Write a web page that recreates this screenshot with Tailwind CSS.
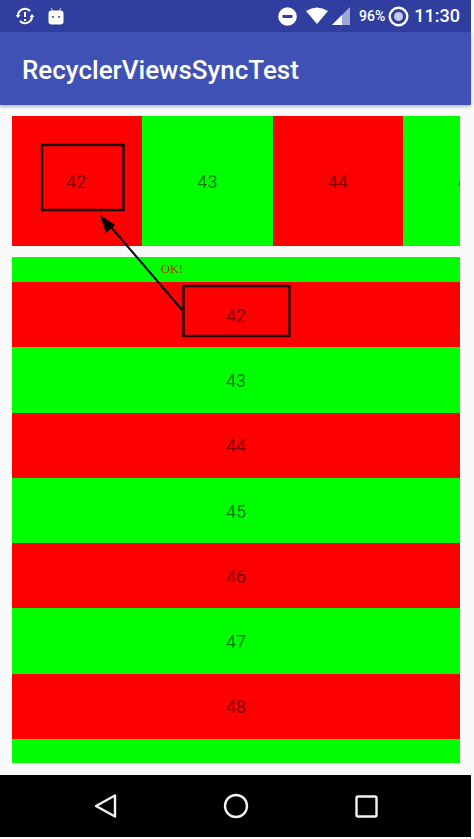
<!DOCTYPE html>
<html>
<head>
<title>RecyclerViewsSyncTest</title>
<meta charset="utf-8">
<script src="https://cdn.jsdelivr.net/npm/@tailwindcss/browser@4"></script>
</head>
<body class="bg-[#fafafa] overflow-hidden font-['Roboto',sans-serif]">
  <div class="relative w-[474px] h-[839px] overflow-hidden">
    <div class="w-[471px] h-[837px] flex flex-col">
      <!-- status bar -->
      <div class="h-8 bg-[#303f9f] flex items-center pl-[15px] pr-[11px] text-white shrink-0">
        <svg class="w-[20px] h-[18px] mr-[13px]" viewBox="0 0 20 18" fill="none" stroke="white" stroke-width="2">
          <path d="M3 9a7 7 0 0 1 12-5"/><path d="M17 9a7 7 0 0 1-12 5"/>
          <path d="M0.500 8h5l-2.500 3z" fill="white" stroke="none"/><path d="M14.500 10h5l-2.500-3z" fill="white" stroke="none"/>
          <path d="M10 5v5M10 12v2" stroke-width="2"/>
        </svg>
        <svg class="w-4 h-[18px]" viewBox="0 0 16 18" fill="white">
          <path d="M3 1l2 3M13 1l-2 3" stroke="#c5cae9" stroke-width="1"/>
          <rect x="0.500" y="3.500" width="15" height="14" rx="3"/>
          <circle cx="5" cy="10" r="1" fill="#303f9f"/><circle cx="11" cy="10" r="1" fill="#303f9f"/>
        </svg>
        <div class="flex-1"></div>
        <svg class="w-[19px] h-[19px] mr-[9px]" viewBox="0 0 19 19">
          <circle cx="9.500" cy="9.500" r="9.300" fill="white"/><rect x="4.500" y="8" width="10" height="3" fill="#303f9f"/>
        </svg>
        <svg class="w-[24px] h-[18px] mr-[2px]" viewBox="0 0 24 18"><path d="M0 4Q11 -3 22 4L11 17z" fill="white"/></svg>
        <svg class="w-[19px] h-[19px] mr-[8px]" viewBox="0 0 19 19">
          <path d="M0 18L18 0V18z" fill="#9fa8da"/><path d="M0 18L10 8V18z" fill="white"/>
        </svg>
        <span class="text-[14px] font-medium leading-none mr-[3px]">96%</span>
        <svg class="w-[21px] h-[21px] mr-[5px]" viewBox="0 0 21 21" fill="none">
          <circle cx="10.500" cy="10.500" r="8.800" stroke="white" stroke-width="2.400"/><circle cx="10.500" cy="10.500" r="4.500" fill="#c5cae9"/>
        </svg>
        <span class="text-[18px] font-medium leading-none">11:30</span>
      </div>
      <!-- toolbar -->
      <div class="h-[73px] bg-[#3f51b5] flex items-center pl-[22px] pt-[3px] shrink-0 shadow-[0_2px_3px_rgba(0,0,0,0.25)]">
        <span class="text-white text-[26px] font-medium leading-none">RecyclerViewsSyncTest</span>
      </div>
      <!-- horizontal list -->
      <div class="mt-[11px] ml-3 w-[448px] h-[130px] flex overflow-hidden text-[18px] shrink-0">
        <div class="w-[130.300px] shrink-0 pt-[1px] pr-[2px] bg-[#ff0000] text-black/50 flex items-center justify-center">42</div>
        <div class="w-[130.300px] shrink-0 pt-[1px] bg-[#00ff00] text-black/50 flex items-center justify-center">43</div>
        <div class="w-[130.300px] shrink-0 pt-[1px] bg-[#ff0000] text-black/50 flex items-center justify-center">44</div>
        <div class="w-[130.300px] shrink-0 pt-[1px] bg-[#00ff00] text-black/50 flex items-center justify-center">45</div>
      </div>
      <!-- vertical list -->
      <div class="mt-[11px] ml-3 w-[448px] h-[506px] flex flex-col overflow-hidden text-[18px] text-black/50 shrink-0">
        <div class="h-[25px] shrink-0 bg-[#00ff00]"></div>
        <div class="h-[65.300px] shrink-0 pt-[1px] bg-[#ff0000] flex items-center justify-center">42</div>
        <div class="h-[65.300px] shrink-0 pt-[1px] bg-[#00ff00] flex items-center justify-center">43</div>
        <div class="h-[65.300px] shrink-0 pt-[1px] bg-[#ff0000] flex items-center justify-center">44</div>
        <div class="h-[65.300px] shrink-0 pt-[1px] bg-[#00ff00] flex items-center justify-center">45</div>
        <div class="h-[65.300px] shrink-0 pt-[1px] bg-[#ff0000] flex items-center justify-center">46</div>
        <div class="h-[65.300px] shrink-0 pt-[1px] bg-[#00ff00] flex items-center justify-center">47</div>
        <div class="h-[65.300px] shrink-0 pt-[1px] bg-[#ff0000] flex items-center justify-center">48</div>
        <div class="flex-1 bg-[#00ff00]"></div>
      </div>
      <!-- nav bar -->
      <div class="mt-3 flex-1 bg-black relative flex items-center justify-center">
        <svg class="w-[471px] h-[62px]" viewBox="0 0 471 62" fill="none" stroke="#f2f2f2" stroke-width="2.400" stroke-linejoin="round">
          <path d="M115 20.500V41.500L96 31z"/>
          <circle cx="236" cy="31" r="11"/>
          <rect x="356.500" y="21.500" width="20" height="20" rx="1.500"/>
        </svg>
      </div>
    </div>
    <!-- hand-drawn annotation over the screenshot -->
    <svg class="absolute inset-0 pointer-events-none" width="474" height="839" viewBox="0 0 474 839" fill="none">
      <rect x="42" y="145" width="81.500" height="65" stroke="#1a0000" stroke-width="2.400"/>
      <rect x="183.500" y="286" width="106" height="50" stroke="#1a0000" stroke-width="2.400"/>
      <path d="M183 311L111 227" stroke="#000" stroke-width="2"/>
      <path d="M100 215L115 225L106 233z" fill="#000"/>
    </svg>
    <span class="absolute left-[161px] top-[262px] text-[12.500px] leading-[15px] text-[#a83a00] font-['Liberation_Serif',serif]">OK!</span>
  </div>
</body>
</html>
